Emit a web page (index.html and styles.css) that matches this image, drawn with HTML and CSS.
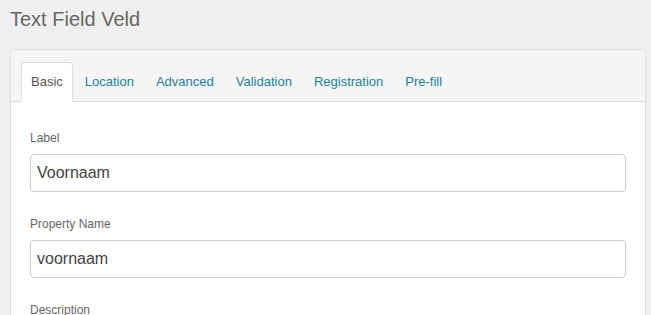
FILE: index.html
```html
<!DOCTYPE html>
<html>
<head>
<meta charset="utf-8">
<link rel="stylesheet" href="styles.css">
</head>
<body>
<h1 class="title">Text Field Veld</h1>
<div class="panel">
  <div class="panel-head">
    <ul class="tabs">
      <li class="tab active">Basic</li>
      <li class="tab">Location</li>
      <li class="tab">Advanced</li>
      <li class="tab">Validation</li>
      <li class="tab">Registration</li>
      <li class="tab">Pre-fill</li>
    </ul>
  </div>
  <div class="panel-body">
    <div class="group">
      <label class="label">Label</label>
      <div class="input">Voornaam</div>
    </div>
    <div class="group">
      <label class="label">Property Name</label>
      <div class="input">voornaam</div>
    </div>
    <div class="group">
      <label class="label">Description</label>
    </div>
  </div>
</div>
</body>
</html>
```
FILE: styles.css
```css
html, body {
  margin: 0;
  padding: 0;
  background: #efefef;
  font-family: "Liberation Sans", Arial, sans-serif;
  overflow: hidden;
}
.title {
  margin: 8px 0 19px 10px;
  font-size: 20px;
  line-height: 22px;
  font-weight: normal;
  color: #666;
}
.panel {
  margin-left: 10px;
  width: 636px;
  box-sizing: border-box;
  border: 1px solid #ddd;
  border-radius: 4px;
  background: #fff;
}
.panel-head {
  background: #f5f5f5;
  border-bottom: 1px solid #ddd;
  border-radius: 4px 4px 0 0;
  padding: 12px 10px 0;
}
.tabs {
  list-style: none;
  margin: 0 0 -1px;
  padding: 0;
  display: flex;
}
.tab {
  padding: 10px 9px 11px;
  margin-right: 2px;
  font-size: 13px;
  line-height: 17px;
  color: #22819f;
  border: 1px solid transparent;
  border-radius: 4px 4px 0 0;
}
.tab.active {
  background: #fff;
  border-color: #ddd #ddd #fff;
  color: #555;
}
.panel-body {
  padding: 28px 19px 0;
}
.group {
  margin-bottom: 24px;
}
.label {
  display: block;
  font-size: 12px;
  line-height: 17px;
  color: #666;
  margin-bottom: 7px;
}
.input {
  height: 38px;
  box-sizing: border-box;
  border: 1px solid #ccc;
  border-radius: 4px;
  padding: 0 6px;
  font-size: 16px;
  line-height: 36px;
  color: #444;
  background: #fff;
}
```
